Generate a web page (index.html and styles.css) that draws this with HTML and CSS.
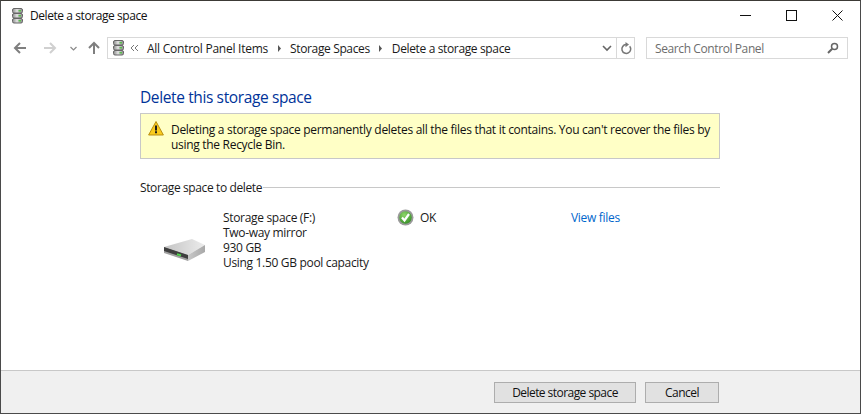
FILE: index.html
```html
<!DOCTYPE html>
<html lang="en">
<head>
<meta charset="utf-8">
<title>Delete a storage space</title>
<link rel="stylesheet" href="styles.css">
</head>
<body>
<svg class="defs" width="0" height="0" aria-hidden="true">
  <defs>
    <linearGradient id="cyl" x1="0" x2="1" y1="0" y2="0">
      <stop offset="0" stop-color="#8a8a8a"/><stop offset=".45" stop-color="#e2e2e2"/><stop offset="1" stop-color="#8c8c8c"/>
    </linearGradient>
    <symbol id="db" viewBox="0 0 11 16">
      <rect x="0.5" y="0.5" width="10" height="4.5" rx="1.5" fill="url(#cyl)" stroke="#666"/>
      <rect x="0.5" y="5.5" width="10" height="4.5" rx="1.5" fill="url(#cyl)" stroke="#666"/>
      <rect x="0.5" y="10.5" width="10" height="4.5" rx="1.5" fill="url(#cyl)" stroke="#666"/>
      <rect x="6.5" y="2" width="2.5" height="1.5" fill="#58c04a"/>
      <rect x="6.5" y="7" width="2.5" height="1.5" fill="#58c04a"/>
      <rect x="6.5" y="12" width="2.5" height="1.5" fill="#58c04a"/>
    </symbol>
  </defs>
</svg>
<div class="window">
  <header class="titlebar">
    <svg class="title-icon"><use href="#db"/></svg>
    <span class="title-text">Delete a storage space</span>
    <div class="caption">
      <span class="cap-btn"><svg width="11" height="11" viewBox="0 0 11 11"><path d="M0 5.5h11" stroke="#111" fill="none"/></svg></span>
      <span class="cap-btn"><svg width="11" height="11" viewBox="0 0 11 11"><rect x=".5" y=".5" width="10" height="10" stroke="#111" fill="none"/></svg></span>
      <span class="cap-btn"><svg width="11" height="11" viewBox="0 0 11 11"><path d="M.5.5l10 10M10.5.5l-10 10" stroke="#111" fill="none"/></svg></span>
    </div>
  </header>
  <nav class="navbar">
    <svg class="nav-back" width="14" height="14" viewBox="0 0 14 14"><path d="M13 7H2M7 2L2 7l5 5" stroke="#7f7f7f" stroke-width="2" fill="none"/></svg>
    <svg class="nav-forward" width="14" height="14" viewBox="0 0 14 14"><path d="M1 7h11M7 2l5 5-5 5" stroke="#d0d0d0" stroke-width="2" fill="none"/></svg>
    <svg class="nav-drop" width="7" height="5" viewBox="0 0 7 5"><path d="M.5 1l3 3 3-3" stroke="#8a8a8a" stroke-width="1.2" fill="none"/></svg>
    <svg class="nav-up" width="14" height="14" viewBox="0 0 14 14"><path d="M7 13V2M2 7l5-5 5 5" stroke="#7f7f7f" stroke-width="2" fill="none"/></svg>
    <div class="address">
      <svg class="addr-icon"><use href="#db"/></svg>
      <svg class="chev" width="9" height="8" viewBox="0 0 9 8"><path d="M4 1L1 4l3 3M8 1L5 4l3 3" stroke="#777" fill="none"/></svg>
      <span class="crumb crumb-first">All Control Panel Items</span><span class="sep"><svg width="5" height="7" viewBox="0 0 5 7"><path d="M1 0l3 3.5L1 7" fill="#555"/></svg></span>
      <span class="crumb">Storage Spaces</span><span class="sep"><svg width="5" height="7" viewBox="0 0 5 7"><path d="M1 0l3 3.5L1 7" fill="#555"/></svg></span>
      <span class="crumb">Delete a storage space</span>
      <span class="addr-drop"><svg width="10" height="7" viewBox="0 0 10 7"><path d="M1 1l4 4 4-4" stroke="#666" stroke-width="1.6" fill="none"/></svg></span>
      <span class="addr-refresh"><svg width="12" height="13" viewBox="0 0 12 13"><path d="M9.7 4.2A4.4 4.4 0 1 1 6 2.6" stroke="#777" stroke-width="1.5" fill="none"/><path d="M5.5 0v5.2L9 2.6z" fill="#777"/></svg></span>
    </div>
    <div class="search">
      <span>Search Control Panel</span>
      <svg width="12" height="12" viewBox="0 0 12 12"><circle cx="7.5" cy="4.5" r="3" stroke="#666" stroke-width="1.5" fill="none"/><path d="M5.2 6.8L1 11" stroke="#666" stroke-width="2" fill="none"/></svg>
    </div>
  </nav>
  <main class="content">
    <h1 class="heading">Delete this storage space</h1>
    <div class="warning">
      <svg class="warn-icon" width="16" height="16" viewBox="0 0 16 16"><path d="M8 1.5L15.4 15H.6z" fill="#f9cb1f" stroke="#b98d10" stroke-linejoin="round"/><path d="M8 5.5v5" stroke="#1c1c1c" stroke-width="2"/><path d="M8 11.3v2" stroke="#1c1c1c" stroke-width="2"/></svg>
      <p class="warn-text">Deleting a storage space permanently deletes all the files that it contains. You can't recover the files by using the Recycle Bin.</p>
    </div>
    <div class="section-head"><span>Storage space to delete</span><i class="rule"></i></div>
    <div class="space-row">
      <svg class="drive" width="42" height="24" viewBox="0 0 42 24">
        <defs>
          <linearGradient id="top" x1="0" x2="1" y1="0" y2="0"><stop offset="0" stop-color="#c4c4c4"/><stop offset="1" stop-color="#ececec"/></linearGradient>
          <linearGradient id="side" x1="0" x2="1" y1="0" y2="0"><stop offset="0" stop-color="#c8c8c8"/><stop offset="1" stop-color="#a8a8a8"/></linearGradient>
        </defs>
        <path d="M0 9L28 1 41 7 24 17z" fill="url(#top)"/>
        <path d="M0 9L24 17V23L0 15z" fill="#a0a0a0"/>
        <path d="M0 9L24 17V21L0 13z" fill="#3f3f3f"/>
        <path d="M24 17L41 7v7L24 23z" fill="url(#side)"/>
        <path d="M13 16.2l4 1.2" stroke="#4fd84a" stroke-width="2"/>
      </svg>
      <div class="space-info">
        <div>Storage space (F:)</div>
        <div>Two-way mirror</div>
        <div>930 GB</div>
        <div>Using 1.50 GB pool capacity</div>
      </div>
      <div class="status">
        <svg class="status-icon" width="17" height="17" viewBox="0 0 17 17">
          <defs><radialGradient id="ok" cx=".4" cy=".3" r=".8"><stop offset="0" stop-color="#8fd66a"/><stop offset="1" stop-color="#2f8a22"/></radialGradient></defs>
          <circle cx="8.5" cy="8.5" r="8" fill="#9a9a9a"/><circle cx="8.5" cy="8.5" r="6.2" fill="url(#ok)"/><path d="M5 8.5l2.5 3L12 5" stroke="#fff" stroke-width="2.2" fill="none"/>
        </svg>
        <span>OK</span>
      </div>
      <a class="view-link" href="#">View files</a>
    </div>
  </main>
  <footer class="footer">
    <button class="btn btn-delete" type="button">Delete storage space</button>
    <button class="btn btn-cancel" type="button">Cancel</button>
  </footer>
</div>
</body>
</html>
```
FILE: styles.css
```css
* { box-sizing: border-box; }
html, body { margin: 0; height: 100%; }
body { font: 12px/15px "Open Sans", "Noto Sans", sans-serif; letter-spacing: -0.3px; color: #1a1a1a; background: #fff; overflow: hidden; }
.defs { position: absolute; }
.window { height: 414px; display: flex; flex-direction: column; border: 1px solid #4a4a4a; border-top-color: #3c3a36; background: #fff; }
.titlebar { height: 29px; flex: none; display: flex; align-items: center; padding-left: 11px; }
.title-icon { width: 11px; height: 16px; margin-right: 7px; }
.title-text { color: #111; letter-spacing: -0.43px; }
.caption { margin-left: auto; display: flex; }
.cap-btn { width: 46px; height: 29px; display: flex; align-items: center; justify-content: center; }
.navbar { height: 36px; flex: none; display: flex; align-items: center; padding: 0 0 0 12px; }
.nav-back { margin-right: 16px; }
.nav-forward { margin-right: 13px; }
.nav-drop { margin-right: 10px; }
.nav-up { margin-right: 6px; }
.address { width: 528px; height: 22px; border: 1px solid #d9d9d9; display: flex; align-items: center; padding-left: 5px; }
.addr-icon { width: 11px; height: 16px; margin-right: 6px; }
.chev { margin-right: 8px; }
.crumb { letter-spacing: -0.36px; }
.crumb-first { letter-spacing: -0.25px; }
.sep { width: 22px; display: flex; justify-content: center; }
.addr-drop { margin-left: auto; width: 18px; height: 100%; display: flex; align-items: center; justify-content: center; }
.addr-refresh { width: 18px; height: 100%; border-left: 1px solid #d9d9d9; display: flex; align-items: center; justify-content: center; }
.search { width: 202px; height: 22px; margin-left: 11px; border: 1px solid #d9d9d9; display: flex; align-items: center; justify-content: space-between; padding: 0 8px; color: #6d6d6d; letter-spacing: -0.4px; }
.content { flex: 1; padding: 0 0 0 139px; }
.heading { margin: 21px 0 6px; font-size: 15.5px; line-height: 20px; font-weight: 400; color: #003399; letter-spacing: -0.38px; }
.warning { width: 580px; height: 46px; background: #ffffc6; border: 1px solid #c8c8c8; display: flex; padding: 6px 0 0 7px; }
.warn-icon { flex: none; margin-right: 7px; }
.warn-text { margin: 2px 0 0; color: #111; }
.section-head { width: 580px; margin-top: 21px; display: flex; align-items: center; letter-spacing: -0.38px; }
.rule { flex: 1; height: 1px; background: #c8c8c8; margin-left: 1px; }
.space-row { margin-top: 15px; display: flex; position: relative; }
.drive { position: absolute; left: 24px; top: 28px; }
.space-info { margin-left: 83px; width: 174px; letter-spacing: -0.32px; }
.space-info div { line-height: 15px; }
.status { width: 174px; display: flex; align-items: flex-start; gap: 6px; }
.status-icon { margin-top: -1px; }
.view-link { color: #0066cc; text-decoration: none; }
.footer { height: 43px; flex: none; background: #f0f0f0; border-top: 1px solid #c8c8c8; display: flex; justify-content: flex-end; align-items: center; gap: 9px; padding: 0 141px 0 0; }
.btn { font: inherit; letter-spacing: -0.55px; height: 21px; padding: 0; background: #e1e1e1; border: 1px solid #adadad; color: #111; }
.btn-delete { width: 142px; }
.btn-cancel { width: 74px; }
```
